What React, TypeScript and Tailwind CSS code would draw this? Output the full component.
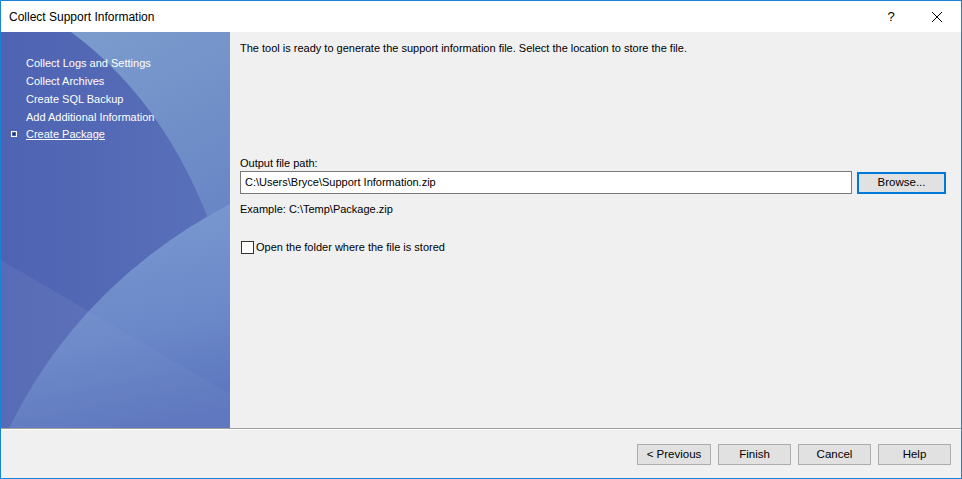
import React from "react";

const font = { fontFamily: '"Liberation Sans", Arial, sans-serif' };

function PanelArt() {
  return (
    <svg className="absolute inset-0" width="229" height="396" viewBox="0 0 229 396" preserveAspectRatio="none">
      <defs>
        <linearGradient id="base" x1="0" y1="0" x2="1" y2="0">
          <stop offset="0" stopColor="#4e63b2" />
          <stop offset="1" stopColor="#5a71ba" />
        </linearGradient>
        <linearGradient id="light1" x1="0" y1="0" x2="0.3" y2="1">
          <stop offset="0" stopColor="#7c9ccd" />
          <stop offset="1" stopColor="#6684c4" />
        </linearGradient>
        <linearGradient id="light2" x1="0.4" y1="0" x2="0.6" y2="1">
          <stop offset="0" stopColor="#7b9ad0" />
          <stop offset="0.6" stopColor="#6a87c8" />
          <stop offset="1" stopColor="#5a74bd" />
        </linearGradient>
      </defs>
      <rect x="0" y="0" width="229" height="396" fill="url(#base)" />
      <path d="M70 0 Q 185 85 229 255 L229 0 Z" fill="url(#light1)" />
      <path d="M0 228 L229 362 L229 396 L0 396 Z" fill="#ffffff" opacity="0.03" />
      <path d="M8 396 Q 80 250 229 172 L229 396 Z" fill="url(#light2)" />
      <path d="M0 228 L229 362 L229 396 L0 396 Z" fill="#ffffff" opacity="0.03" />
    </svg>
  );
}

function Btn({ children, className = "" }: { children: React.ReactNode; className?: string }) {
  return (
    <div
      className={`flex items-center justify-center bg-[#e1e1e1] border border-[#adadad] text-[11.5px] text-black ${className}`}
    >
      {children}
    </div>
  );
}

export default function App() {
  const items = ["Collect Logs and Settings", "Collect Archives", "Create SQL Backup"];
  return (
    <div style={font} className="w-[962px] h-[479px] border border-[#1883d7] flex flex-col bg-white overflow-hidden">
      <div className="h-[31px] flex items-center bg-white shrink-0">
        <div className="pl-[8px] text-[12px] text-black flex-1">Collect Support Information</div>
        <div className="w-[20px] text-center text-[13px] text-black mr-[30px]">?</div>
        <svg width="12" height="12" viewBox="0 0 12 12" className="mr-[18px]">
          <path d="M1 1 L11 11 M11 1 L1 11" stroke="#000" strokeWidth="1" />
        </svg>
      </div>
      <div className="h-[396px] flex shrink-0">
        <div className="w-[229px] h-[396px] relative shrink-0 overflow-hidden">
          <PanelArt />
          <div className="relative pt-[22px] text-white text-[11px]">
            {items.map((t) => (
              <div key={t} className="pl-[25px] leading-[18px] h-[18px] overflow-hidden">
                {t}
              </div>
            ))}
            <div className="pl-[25px] leading-[18px] h-[15px] mb-[2px] overflow-hidden">Add Additional Information</div>
            <div className="flex items-center leading-[18px] h-[18px]">
              <div className="ml-[10px] w-[6px] h-[6px] border border-white flex items-center justify-center">
                <div className="w-[2px] h-[2px] bg-[#1f2a60]" />
              </div>
              <span className="ml-[9px] underline">Create Package</span>
            </div>
          </div>
        </div>
        <div className="flex-1 bg-[#f0f0f0] pl-[10px] pr-[15px] pt-[9px] text-[11px] text-black">
          <div className="leading-[14px]">
            The tool is ready to generate the support information file. Select the location to store the file.
          </div>
          <div className="leading-[14px] mt-[101px]">Output file path:</div>
          <div className="flex mt-[1px] gap-[5px] items-start">
            <div className="w-[612px] h-[23px] bg-white border border-[#7a7a7a] flex items-center pl-[4px]">
              C:\Users\Bryce\Support Information.zip
            </div>
            <div className="w-[89px] h-[22px] mt-[1px] bg-[#e1e1e1] border-2 border-[#0078d7] flex items-center justify-center text-[11.5px]">
              Browse...
            </div>
          </div>
          <div className="leading-[14px] mt-[8px]">Example: C:\Temp\Package.zip</div>
          <div className="flex items-center mt-[24px] leading-[14px]">
            <div className="w-[13px] h-[13px] bg-white border border-[#333333] ml-[1px]" />
            <span className="ml-[2px]">Open the folder where the file is stored</span>
          </div>
        </div>
      </div>
      <div className="h-[1px] bg-[#a0a0a0] shrink-0" />
      <div className="h-[1px] bg-white shrink-0" />
      <div className="flex-1 bg-[#f0f0f0] flex justify-end items-start pt-[14px] pr-[10px] gap-[7px]">
        <Btn className="w-[74px] h-[21px]">&lt; Previous</Btn>
        <Btn className="w-[73px] h-[21px]">Finish</Btn>
        <Btn className="w-[73px] h-[21px]">Cancel</Btn>
        <Btn className="w-[73px] h-[21px]">Help</Btn>
      </div>
    </div>
  );
}
